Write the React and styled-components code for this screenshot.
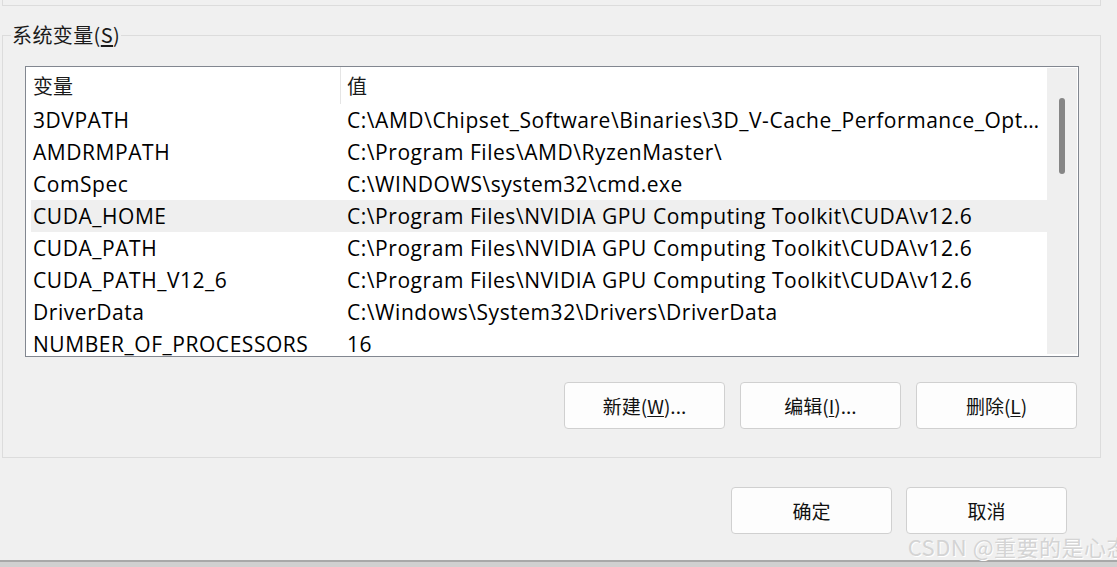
import React from "react"
import styled, { createGlobalStyle } from "styled-components"

const GlobalStyle = createGlobalStyle`
  html, body {
    margin: 0;
    padding: 0;
    background: #f0f0f0;
  }
  body {
    font-family: "Open Sans", "Noto Sans", "Noto Sans CJK SC", sans-serif;
    color: #000;
  }
`

const rows = [
  ["3DVPATH", "C:\\AMD\\Chipset_Software\\Binaries\\3D_V-Cache_Performance_Optimizer\\bin\\"],
  ["AMDRMPATH", "C:\\Program Files\\AMD\\RyzenMaster\\"],
  ["ComSpec", "C:\\WINDOWS\\system32\\cmd.exe"],
  ["CUDA_HOME", "C:\\Program Files\\NVIDIA GPU Computing Toolkit\\CUDA\\v12.6", true],
  ["CUDA_PATH", "C:\\Program Files\\NVIDIA GPU Computing Toolkit\\CUDA\\v12.6"],
  ["CUDA_PATH_V12_6", "C:\\Program Files\\NVIDIA GPU Computing Toolkit\\CUDA\\v12.6"],
  ["DriverData", "C:\\Windows\\System32\\Drivers\\DriverData"],
  ["NUMBER_OF_PROCESSORS", "16"],
]

const App = () => {
  return (
    <Page>
      <GlobalStyle />
      <UpperGroup />
      <Group>
        <Legend>
          系统变量(<u>S</u>)
        </Legend>
        <ListBox>
          <ListInner>
            <HeaderRow>
              <HeadCell>变量</HeadCell>
              <HeadCell divider>值</HeadCell>
            </HeaderRow>
            {rows.map(([name, value, hover]) => (
              <Row key={name} hover={hover ? 1 : 0}>
                <NameCell>{name}</NameCell>
                <ValueCell>{value}</ValueCell>
              </Row>
            ))}
          </ListInner>
          <ScrollTrack>
            <Thumb />
          </ScrollTrack>
        </ListBox>
        <ButtonRow>
          <Button>
            新建(<u>W</u>)...
          </Button>
          <Button>
            编辑(<u>I</u>)...
          </Button>
          <Button>
            删除(<u>L</u>)
          </Button>
        </ButtonRow>
      </Group>
      <DialogButtons>
        <Button>确定</Button>
        <Button>取消</Button>
      </DialogButtons>
      <Spacer />
      <Watermark>CSDN @重要的是心态</Watermark>
      <BottomEdge />
    </Page>
  )
}

const Page = styled.div`
  position: relative;
  width: 1117px;
  height: 567px;
  overflow: hidden;
  display: flex;
  flex-direction: column;
`

const UpperGroup = styled.div`
  box-sizing: border-box;
  margin-left: 2px;
  width: 1099px;
  height: 6px;
  border: 1px solid #dcdcdc;
  border-top: none;
  flex-shrink: 0;
`

const Group = styled.fieldset`
  box-sizing: border-box;
  margin: 17px 0 0 2px;
  width: 1099px;
  border: 1px solid #dcdcdc;
  padding: 19px 21px 28px 22px;
  min-width: 0;
`

const Legend = styled.legend`
  margin-left: -14px;
  padding: 0 1px;
  font-size: 20px;
  line-height: 24px;
  font-family: "Noto Sans CJK SC", sans-serif;
  color: #1a1a1a;
  letter-spacing: 0.4px;

  u {
    text-underline-offset: 2px;
  }
`

const ListBox = styled.div`
  box-sizing: border-box;
  height: 291px;
  border: 1px solid #828790;
  background: #fff;
  display: flex;
  overflow: hidden;
`

const ListInner = styled.div`
  flex: 1;
  min-width: 0;
  padding: 0 0 0 5px;
  overflow: hidden;
`

const HeaderRow = styled.div`
  display: grid;
  grid-template-columns: 309px 1fr;
  height: 37px;
  align-items: center;
`

const HeadCell = styled.div`
  height: 100%;
  display: flex;
  align-items: center;
  padding-left: ${(p) => (p.divider ? "6px" : "2px")};
  border-left: ${(p) => (p.divider ? "1px solid #e5e5e5" : "none")};
  font-family: "Noto Sans CJK SC", sans-serif;
  font-size: 20px;
  color: #1a1a1a;
`

const Row = styled.div`
  display: grid;
  grid-template-columns: 316px 1fr;
  height: 32px;
  align-items: center;
  background: ${(p) => (p.hover ? "#efefef" : "transparent")};
  font-size: 21px;
  letter-spacing: 0.55px;
  white-space: nowrap;
`

const NameCell = styled.div`
  padding-left: 2px;
  overflow: hidden;
`

const ValueCell = styled.div`
  overflow: hidden;
  text-overflow: ellipsis;
  padding-right: 7px;
`

const ScrollTrack = styled.div`
  width: 30px;
  margin: 1px 1px 2px 0;
  background: #efefef;
  display: flex;
  justify-content: center;
  padding-top: 30px;
  box-sizing: border-box;
`

const Thumb = styled.div`
  width: 6px;
  height: 76px;
  border-radius: 3px;
  background: #868686;
`

const ButtonRow = styled.div`
  display: flex;
  justify-content: flex-end;
  gap: 15px;
  margin-top: 25px;
  padding-right: 2px;
`

const Button = styled.button`
  box-sizing: border-box;
  width: 161px;
  height: 47px;
  border: 1px solid #d0d0d0;
  border-radius: 4px;
  background: #fdfdfd;
  font-family: "Noto Sans CJK SC", sans-serif;
  font-size: 19px;
  color: #111;
  padding: 0;

  u {
    text-underline-offset: 2px;
  }
`

const DialogButtons = styled.div`
  display: flex;
  justify-content: flex-end;
  gap: 14px;
  margin-top: 29px;
  padding-right: 50px;
`

const Spacer = styled.div`
  flex: 1;
`

const Watermark = styled.div`
  position: absolute;
  right: -12px;
  bottom: 5px;
  font-family: "Noto Sans CJK SC", sans-serif;
  font-size: 22px;
  color: #d4d4d4;
  text-shadow: 1px 1px 0 #ffffff;
  letter-spacing: 0.5px;
`

const BottomEdge = styled.div`
  height: 7px;
  border-top: 2px solid #a8a8a8;
  background: #d0d0d0;
  flex-shrink: 0;
  box-sizing: border-box;
`

export default App
